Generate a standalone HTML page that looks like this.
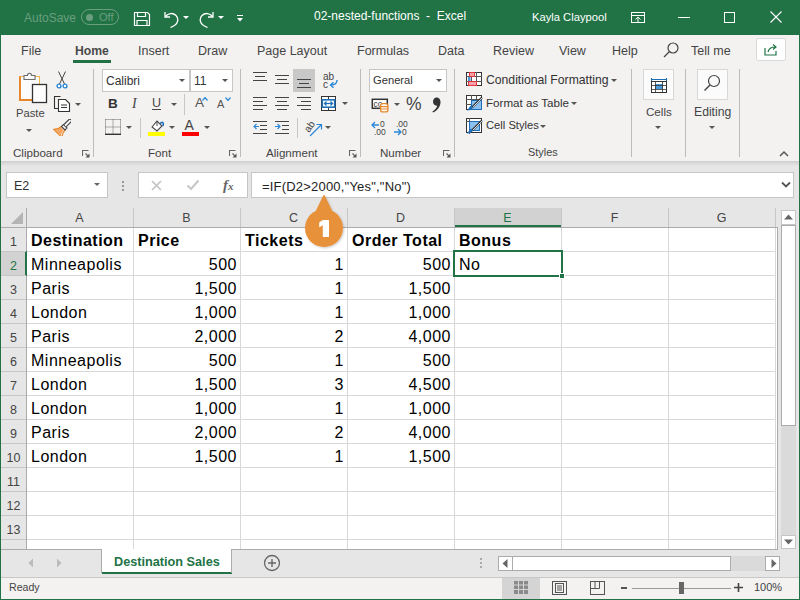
<!DOCTYPE html><html><head><meta charset="utf-8"><style>
*{margin:0;padding:0;box-sizing:border-box}
html,body{width:800px;height:600px;overflow:hidden;background:#f3f2f1;font-family:"Liberation Sans",sans-serif;position:relative}
div,span,svg{position:absolute}
.t{white-space:pre;line-height:1}
</style></head><body>
<div style="left:0px;top:0px;width:800px;height:35px;background:#217346"></div>
<div class="t" style="left:24px;top:12px;font-size:12px;color:#6a9e7f;font-weight:normal;">AutoSave</div>
<div style="left:81px;top:9px;width:38px;height:16px;border:1px solid #6a9e7f;border-radius:8px"></div>
<div style="left:85.5px;top:14px;width:7px;height:7px;background:#6a9e7f;border-radius:50%"></div>
<div class="t" style="left:99px;top:12px;font-size:11px;color:#6a9e7f;font-weight:normal;">Off</div>
<svg style="left:133px;top:11px;" width="18" height="16" viewBox="0 0 18 16"><path d="M1.5 1.5h13l2 2v11h-15z" fill="none" stroke="#fff" stroke-width="1.2"/><path d="M4.5 1.5v4h8v-4M4 14.5v-5h10v5" fill="none" stroke="#fff" stroke-width="1.2"/></svg>
<svg style="left:162px;top:10px;" width="18" height="18" viewBox="0 0 18 18"><path d="M3 2v5h5" fill="none" stroke="#fff" stroke-width="1.3"/><path d="M3.5 6.5C6 3 11 2.5 14 5.5c3 3 2 8-1.5 10l-4 2" fill="none" stroke="#fff" stroke-width="1.3"/></svg>
<svg style="left:183px;top:16px;" width="6" height="4" viewBox="0 0 6 4"><path d="M0 0h6l-3 3z" fill="#fff"/></svg>
<svg style="left:198px;top:10px;" width="18" height="18" viewBox="0 0 18 18"><path d="M15 2v5h-5" fill="none" stroke="#fff" stroke-width="1.3"/><path d="M14.5 6.5C12 3 7 2.5 4 5.5c-3 3-2 8 1.5 10l4 2" fill="none" stroke="#fff" stroke-width="1.3"/></svg>
<svg style="left:218px;top:16px;" width="6" height="4" viewBox="0 0 6 4"><path d="M0 0h6l-3 3z" fill="#fff"/></svg>
<svg style="left:236px;top:14px;" width="8" height="9" viewBox="0 0 8 9"><path d="M1 1.5h6" stroke="#fff" stroke-width="1"/><path d="M1 4h6l-3 3.5z" fill="#fff"/></svg>
<div class="t" style="left:314px;top:10px;font-size:12px;color:#fff;font-weight:normal;">02-nested-functions  -  Excel</div>
<div class="t" style="left:532px;top:12px;font-size:11.2px;color:#fff;font-weight:normal;">Kayla Claypool</div>
<svg style="left:631px;top:12px;" width="14" height="11" viewBox="0 0 14 11"><rect x="0.5" y="0.5" width="13" height="10" fill="none" stroke="#fff"/><path d="M0.5 3.5h13" stroke="#fff"/><path d="M7 10V5M4.5 7.5L7 5l2.5 2.5" fill="none" stroke="#fff"/></svg>
<div style="left:678px;top:17px;width:12px;height:1px;background:#fff"></div>
<div style="left:724px;top:12px;width:11px;height:11px;border:1px solid #fff"></div>
<svg style="left:770px;top:11px;" width="12" height="12" viewBox="0 0 12 12"><path d="M0.5 0.5l11 11M11.5 0.5l-11 11" stroke="#fff" stroke-width="1.1"/></svg>
<div class="t" style="left:21px;top:45px;font-size:12.5px;color:#444;font-weight:normal;">File</div>
<div class="t" style="left:75px;top:45px;font-size:12.2px;color:#4a4a4a;font-weight:bold;">Home</div>
<div class="t" style="left:138px;top:45px;font-size:12.5px;color:#444;font-weight:normal;">Insert</div>
<div class="t" style="left:198px;top:45px;font-size:12.5px;color:#444;font-weight:normal;">Draw</div>
<div class="t" style="left:257px;top:45px;font-size:12.5px;color:#444;font-weight:normal;">Page Layout</div>
<div class="t" style="left:357px;top:45px;font-size:12.5px;color:#444;font-weight:normal;">Formulas</div>
<div class="t" style="left:438px;top:45px;font-size:12.5px;color:#444;font-weight:normal;">Data</div>
<div class="t" style="left:493px;top:45px;font-size:12.5px;color:#444;font-weight:normal;">Review</div>
<div class="t" style="left:559px;top:45px;font-size:12.5px;color:#444;font-weight:normal;">View</div>
<div class="t" style="left:612px;top:45px;font-size:12.5px;color:#444;font-weight:normal;">Help</div>
<div class="t" style="left:691px;top:45px;font-size:12.5px;color:#444;font-weight:normal;">Tell me</div>
<div style="left:73px;top:60px;width:38px;height:3px;background:#217346"></div>
<svg style="left:663px;top:42px;" width="16" height="16" viewBox="0 0 16 16"><circle cx="10" cy="6" r="5" fill="none" stroke="#444" stroke-width="1.2"/><path d="M6.5 9.5L1 15" stroke="#444" stroke-width="1.3"/></svg>
<div style="left:756px;top:38px;width:30px;height:23px;background:#fff;border:1px solid #dadada;border-radius:2px"></div>
<svg style="left:763px;top:42px;" width="16" height="15" viewBox="0 0 16 15"><path d="M2 6v7h11V9" fill="none" stroke="#217346" stroke-width="1.2"/><path d="M5 10c1-4 4-5 7-5M10 2.5l3 2.5-3 2.5" fill="none" stroke="#217346" stroke-width="1.2"/></svg>
<div style="left:93px;top:69px;width:1px;height:88px;background:#bcbcbc"></div>
<div style="left:240px;top:69px;width:1px;height:88px;background:#bcbcbc"></div>
<div style="left:360px;top:69px;width:1px;height:88px;background:#bcbcbc"></div>
<div style="left:454px;top:69px;width:1px;height:88px;background:#bcbcbc"></div>
<div style="left:631px;top:69px;width:1px;height:88px;background:#bcbcbc"></div>
<div style="left:685px;top:69px;width:1px;height:88px;background:#bcbcbc"></div>
<div style="left:739px;top:69px;width:1px;height:88px;background:#bcbcbc"></div>
<div class="t" style="left:13px;top:147px;font-size:11.6px;color:#444;font-weight:normal;">Clipboard</div>
<div class="t" style="left:148px;top:147px;font-size:11.6px;color:#444;font-weight:normal;">Font</div>
<div class="t" style="left:266px;top:147px;font-size:11.6px;color:#444;font-weight:normal;">Alignment</div>
<div class="t" style="left:380px;top:147px;font-size:11.6px;color:#444;font-weight:normal;">Number</div>
<div class="t" style="left:528px;top:147px;font-size:10.9px;color:#444;font-weight:normal;">Styles</div>
<svg style="left:82px;top:150px;" width="8" height="8" viewBox="0 0 8 8"><path d="M0.5 6V0.5H6.5" fill="none" stroke="#666" stroke-width="1.1"/><path d="M3.5 3.5l3 3" stroke="#666" stroke-width="1.2"/><path d="M7.5 3.5v4h-4z" fill="#555"/></svg>
<svg style="left:229px;top:150px;" width="8" height="8" viewBox="0 0 8 8"><path d="M0.5 6V0.5H6.5" fill="none" stroke="#666" stroke-width="1.1"/><path d="M3.5 3.5l3 3" stroke="#666" stroke-width="1.2"/><path d="M7.5 3.5v4h-4z" fill="#555"/></svg>
<svg style="left:349px;top:150px;" width="8" height="8" viewBox="0 0 8 8"><path d="M0.5 6V0.5H6.5" fill="none" stroke="#666" stroke-width="1.1"/><path d="M3.5 3.5l3 3" stroke="#666" stroke-width="1.2"/><path d="M7.5 3.5v4h-4z" fill="#555"/></svg>
<svg style="left:443px;top:150px;" width="8" height="8" viewBox="0 0 8 8"><path d="M0.5 6V0.5H6.5" fill="none" stroke="#666" stroke-width="1.1"/><path d="M3.5 3.5l3 3" stroke="#666" stroke-width="1.2"/><path d="M7.5 3.5v4h-4z" fill="#555"/></svg>
<svg style="left:16px;top:71px;" width="32" height="33" viewBox="0 0 32 33"><rect x="3.5" y="5.5" width="20" height="24" fill="#fbfbfb" stroke="#f3b44f" stroke-width="1"/><path d="M4 5.5V29h19" fill="none" stroke="#e8862a" stroke-width="2"/><path d="M8 8.5V4.5h3.5c0-3 4-3 4 0H19v4z" fill="#fafafa" stroke="#6b6b6b" stroke-width="1.1"/><rect x="16.5" y="13.5" width="14" height="18" fill="#fdfdfd" stroke="#333" stroke-width="1.3"/></svg>
<div class="t" style="left:16px;top:108px;font-size:11.2px;color:#444;font-weight:normal;">Paste</div>
<svg style="left:26px;top:128.5px;" width="6" height="4" viewBox="0 0 6 4"><path d="M0 0h6l-3 3z" fill="#555"/></svg>
<svg style="left:56px;top:71px;" width="12" height="18" viewBox="0 0 12 18"><path d="M2.5 0.5L8.5 13M9.5 0.5L3.5 13" stroke="#444" stroke-width="1"/><circle cx="3" cy="15" r="1.9" fill="#fff" stroke="#2b88d8" stroke-width="1.4"/><circle cx="9" cy="15" r="1.9" fill="#fff" stroke="#2b88d8" stroke-width="1.4"/></svg>
<svg style="left:53px;top:96px;" width="18" height="16" viewBox="0 0 18 16"><path d="M6 12.5H1.5V0.5h6" fill="none" stroke="#333" stroke-width="1.1"/><path d="M5.5 3.5h7l4 4v8h-11z" fill="#fff" stroke="#333" stroke-width="1.1"/><path d="M8 9h6M8 11.5h6" stroke="#333"/></svg>
<svg style="left:75px;top:102.5px;" width="6" height="4" viewBox="0 0 6 4"><path d="M0 0h6l-3 3z" fill="#555"/></svg>
<svg style="left:53px;top:119px;" width="18" height="17" viewBox="0 0 18 17"><path d="M1 10.5c3 0 5.5-1 7.5-3l3.5 3.5c-2 2-3 4.5-3 7.5z" fill="#fff" stroke="#e8862a" stroke-width="1.3"/><path d="M2.5 11c2.5-0.5 4-1.2 5.5-2.5l2.5 2.5c-1.2 1.5-2 3-2.5 5.5z" fill="#f4a460"/><path d="M8.5 7.5l2-2 3.5 3.5-2 2z" fill="#fff" stroke="#444" stroke-width="1.1"/><path d="M11 5.5l5-5a1.6 1.6 0 0 1 2.2 2.2l-5 5" fill="#fff" stroke="#444" stroke-width="1.1"/></svg>
<div style="left:102px;top:69px;width:88px;height:23px;background:#fff;border:1px solid #c6c6c6"></div>
<div style="left:190px;top:69px;width:43px;height:23px;background:#fff;border:1px solid #c6c6c6"></div>
<div class="t" style="left:106px;top:75px;font-size:12px;color:#333;font-weight:normal;">Calibri</div>
<div class="t" style="left:194px;top:75px;font-size:12px;color:#333;font-weight:normal;">11</div>
<svg style="left:179px;top:78.5px;" width="6" height="4" viewBox="0 0 6 4"><path d="M0 0h6l-3 3z" fill="#555"/></svg>
<svg style="left:222px;top:78.5px;" width="6" height="4" viewBox="0 0 6 4"><path d="M0 0h6l-3 3z" fill="#555"/></svg>
<div class="t" style="left:108px;top:97px;font-size:13.5px;color:#333;font-weight:bold;">B</div>
<div class="t" style="left:132px;top:97px;font-size:14px;color:#444;font-weight:normal;font-style:italic;font-family:Liberation Serif">I</div>
<div class="t" style="left:152px;top:97px;font-size:12.5px;color:#444;font-weight:normal;">U</div>
<div style="left:152px;top:109px;width:9px;height:1px;background:#444"></div>
<svg style="left:171px;top:102.5px;" width="6" height="4" viewBox="0 0 6 4"><path d="M0 0h6l-3 3z" fill="#555"/></svg>
<div style="left:184px;top:94px;width:1px;height:21px;background:#c8c6c4"></div>
<div class="t" style="left:195px;top:96px;font-size:13.5px;color:#555;font-weight:normal;">A</div>
<svg style="left:202px;top:97px;" width="6" height="4" viewBox="0 0 6 4"><path d="M0.5 3.5l2.5-3 2.5 3" fill="none" stroke="#2b88d8" stroke-width="1.2"/></svg>
<div class="t" style="left:217px;top:99px;font-size:11px;color:#555;font-weight:normal;">A</div>
<svg style="left:225px;top:97px;" width="6" height="4" viewBox="0 0 6 4"><path d="M0.5 0.5l2.5 3 2.5-3" fill="none" stroke="#2b88d8" stroke-width="1.2"/></svg>
<svg style="left:105px;top:119px;" width="16" height="16" viewBox="0 0 16 16"><path d="M0.5 0.5h15M0.5 0.5v15M15.5 0.5v15M8 0.5v15M0.5 8h15" fill="none" stroke="#666" stroke-dasharray="1 1"/><path d="M0 15.3h16" stroke="#333" stroke-width="1.4"/></svg>
<svg style="left:126px;top:125.5px;" width="6" height="4" viewBox="0 0 6 4"><path d="M0 0h6l-3 3z" fill="#555"/></svg>
<div style="left:140px;top:118px;width:1px;height:20px;background:#c8c6c4"></div>
<svg style="left:148px;top:118px;" width="17" height="19" viewBox="0 0 17 19"><path d="M4 9l5-6 5 5-5 5z" fill="#fff" stroke="#444" stroke-width="1.1"/><path d="M9 3v5" stroke="#444"/><path d="M12 6c2-3 4-2 3 2" fill="none" stroke="#1e6fb8" stroke-width="1.6"/><rect x="0" y="14" width="17" height="4" fill="#ffff00"/></svg>
<svg style="left:169px;top:125.5px;" width="6" height="4" viewBox="0 0 6 4"><path d="M0 0h6l-3 3z" fill="#555"/></svg>
<div class="t" style="left:184.5px;top:118px;font-size:14px;color:#444;font-weight:normal;">A</div>
<div style="left:182px;top:132px;width:17px;height:4px;background:#f00"></div>
<svg style="left:204px;top:125.5px;" width="6" height="4" viewBox="0 0 6 4"><path d="M0 0h6l-3 3z" fill="#555"/></svg>
<div style="left:293px;top:69px;width:22px;height:23px;background:#c8c8c8"></div>
<div style="left:253px;top:72px;width:14px;height:1px;background:#444"></div>
<div style="left:255px;top:76px;width:10px;height:1px;background:#444"></div>
<div style="left:253px;top:80px;width:14px;height:1px;background:#444"></div>
<div style="left:275px;top:75px;width:14px;height:1px;background:#444"></div>
<div style="left:277px;top:79px;width:10px;height:1px;background:#444"></div>
<div style="left:275px;top:83px;width:14px;height:1px;background:#444"></div>
<div style="left:297px;top:79px;width:14px;height:1px;background:#444"></div>
<div style="left:299px;top:83px;width:10px;height:1px;background:#444"></div>
<div style="left:297px;top:87px;width:14px;height:1px;background:#444"></div>
<svg style="left:322px;top:71px;" width="17" height="18" viewBox="0 0 17 18"><text x="1" y="8.5" font-family="Liberation Sans" font-size="10" fill="#444">ab</text><text x="1" y="17" font-family="Liberation Sans" font-size="10" fill="#444">c</text><path d="M9 14c2.5 0 6-1 6-5" fill="none" stroke="#2b88d8" stroke-width="1.4"/><path d="M11.5 11.3L8.5 14l3 2.7" fill="none" stroke="#2b88d8" stroke-width="1.4"/></svg>
<div style="left:253px;top:97px;width:14px;height:1px;background:#444"></div>
<div style="left:275px;top:97px;width:14px;height:1px;background:#444"></div>
<div style="left:297px;top:97px;width:14px;height:1px;background:#444"></div>
<div style="left:253px;top:101px;width:10px;height:1px;background:#444"></div>
<div style="left:277px;top:101px;width:10px;height:1px;background:#444"></div>
<div style="left:301px;top:101px;width:10px;height:1px;background:#444"></div>
<div style="left:253px;top:105px;width:14px;height:1px;background:#444"></div>
<div style="left:275px;top:105px;width:14px;height:1px;background:#444"></div>
<div style="left:297px;top:105px;width:14px;height:1px;background:#444"></div>
<div style="left:253px;top:109px;width:10px;height:1px;background:#444"></div>
<div style="left:277px;top:109px;width:10px;height:1px;background:#444"></div>
<div style="left:301px;top:109px;width:10px;height:1px;background:#444"></div>
<svg style="left:321px;top:96px;" width="15" height="15" viewBox="0 0 15 15"><rect x="0.5" y="0.5" width="14" height="14" fill="#fff" stroke="#333"/><path d="M7.5 0v4M7.5 11v4" stroke="#333"/><rect x="1.3" y="3.8" width="12.4" height="7.4" fill="#fff" stroke="#1e6fb8" stroke-width="1.6"/><path d="M4 7.5h7" stroke="#1e6fb8" stroke-width="1.3"/><path d="M5.5 5.5l-2 2 2 2M9.5 5.5l2 2-2 2" fill="none" stroke="#1e6fb8" stroke-width="1.3"/></svg>
<svg style="left:342px;top:101.5px;" width="6" height="4" viewBox="0 0 6 4"><path d="M0 0h6l-3 3z" fill="#555"/></svg>
<div style="left:253px;top:121px;width:14px;height:1px;background:#444"></div>
<div style="left:260px;top:125px;width:7px;height:1px;background:#444"></div>
<div style="left:260px;top:129px;width:7px;height:1px;background:#444"></div>
<div style="left:253px;top:133px;width:14px;height:1px;background:#444"></div>
<div style="left:275px;top:121px;width:14px;height:1px;background:#444"></div>
<div style="left:282px;top:125px;width:7px;height:1px;background:#444"></div>
<div style="left:282px;top:129px;width:7px;height:1px;background:#444"></div>
<div style="left:275px;top:133px;width:14px;height:1px;background:#444"></div>
<svg style="left:253px;top:123px;" width="6" height="7" viewBox="0 0 6 7"><path d="M6 3.5H1M3.5 1L1 3.5 3.5 6" fill="none" stroke="#2b88d8" stroke-width="1.2"/></svg>
<svg style="left:275px;top:123px;" width="6" height="7" viewBox="0 0 6 7"><path d="M0 3.5h5M2.5 1L5 3.5 2.5 6" fill="none" stroke="#2b88d8" stroke-width="1.2"/></svg>
<div style="left:297px;top:118px;width:1px;height:20px;background:#c8c6c4"></div>
<svg style="left:304px;top:118px;" width="20" height="19" viewBox="0 0 20 19"><text x="0" y="0" font-family="Liberation Sans" font-size="10" fill="#444" transform="translate(5 15) rotate(-55)">ab</text><path d="M6 18L17 7" fill="none" stroke="#2b88d8" stroke-width="1.2"/><path d="M12.5 6.5h5v5" fill="none" stroke="#2b88d8" stroke-width="1.2"/></svg>
<svg style="left:325px;top:125.5px;" width="6" height="4" viewBox="0 0 6 4"><path d="M0 0h6l-3 3z" fill="#555"/></svg>
<div style="left:369px;top:69px;width:78px;height:23px;background:#fff;border:1px solid #c6c6c6"></div>
<div class="t" style="left:373px;top:75px;font-size:11.2px;color:#333;font-weight:normal;">General</div>
<svg style="left:436px;top:78.5px;" width="6" height="4" viewBox="0 0 6 4"><path d="M0 0h6l-3 3z" fill="#555"/></svg>
<svg style="left:371px;top:98px;" width="18" height="15" viewBox="0 0 18 15"><rect x="1.3" y="1.3" width="15" height="9" fill="#fff" stroke="#333" stroke-width="1.5"/><text x="2.5" y="9" font-family="Liberation Sans" font-size="8.5" fill="#333">co</text><rect x="9.6" y="5.6" width="7.3" height="8.3" rx="2.2" fill="#fff" stroke="#e8862a" stroke-width="1.3"/><path d="M9.8 8.6h7M9.8 11h7" stroke="#e8862a" stroke-width="1.1"/></svg>
<svg style="left:394px;top:102.5px;" width="6" height="4" viewBox="0 0 6 4"><path d="M0 0h6l-3 3z" fill="#555"/></svg>
<div class="t" style="left:406px;top:96px;font-size:17.5px;color:#444;font-weight:normal;">%</div>
<svg style="left:432px;top:97px;" width="9" height="16" viewBox="0 0 9 16"><path d="M4.5 0.5c2.5 0 4 1.8 4 4.5 0 4.5-3 8.5-7.5 10.5l-0.6-1C3.2 13 4.8 11 5.2 8.8 3 8.8 1 7.3 1 4.7 1 2.2 2.5 0.5 4.5 0.5z" fill="#333"/></svg>
<svg style="left:371px;top:119px;" width="18" height="17" viewBox="0 0 18 17"><path d="M1 6h7M4 3L1 6l3 3" fill="none" stroke="#2b88d8" stroke-width="1.3"/><text x="9" y="8" font-family="Liberation Sans" font-size="8.5" fill="#444">0</text><text x="3" y="16" font-family="Liberation Sans" font-size="8.5" fill="#444">.00</text></svg>
<svg style="left:393px;top:119px;" width="18" height="17" viewBox="0 0 18 17"><text x="3" y="8" font-family="Liberation Sans" font-size="8.5" fill="#444">.00</text><path d="M1 13h7M5 10l3 3-3 3" fill="none" stroke="#2b88d8" stroke-width="1.3"/><text x="9" y="16" font-family="Liberation Sans" font-size="8.5" fill="#444">0</text></svg>
<svg style="left:466px;top:72px;" width="17" height="15" viewBox="0 0 17 15"><rect x="0.5" y="0.5" width="15" height="13" fill="#fff" stroke="#333"/><path d="M0 4.5h16M0 9.5h16M5.5 0v14M10.5 0v14" stroke="#555" stroke-width="1"/><rect x="3.5" y="0.5" width="5" height="4" fill="#f4a0a8" stroke="#e3343f"/><rect x="2" y="5" width="2.5" height="4" fill="#4a9bdc"/><rect x="2.5" y="9.5" width="8" height="4" fill="#f4a0a8" stroke="#e3343f"/></svg>
<div class="t" style="left:486px;top:74px;font-size:12.2px;color:#333;font-weight:normal;">Conditional Formatting</div>
<svg style="left:611px;top:78.5px;" width="6" height="4" viewBox="0 0 6 4"><path d="M0 0h6l-3 3z" fill="#555"/></svg>
<svg style="left:466px;top:95px;" width="17" height="16" viewBox="0 0 17 16"><rect x="0.5" y="0.5" width="15" height="14" fill="#fff" stroke="#333"/><path d="M0 4.5h16M0 9.5h6M5.5 0v9M10.5 0v5" stroke="#555" stroke-width="1"/><rect x="5.5" y="5.5" width="10" height="9" fill="#8cc0ee" stroke="#1e6fb8"/><path d="M6 12.5L16 2.5" stroke="#333" stroke-width="2.2"/><path d="M6.5 12.5L16 3" stroke="#fff" stroke-width="0.8"/><path d="M1 15.5c3 0 5-1 6-3l-2-2c-2 1-2 3-4 5z" fill="#1e6fb8"/></svg>
<div class="t" style="left:486px;top:97px;font-size:11.6px;color:#333;font-weight:normal;">Format as Table</div>
<svg style="left:571px;top:101.5px;" width="6" height="4" viewBox="0 0 6 4"><path d="M0 0h6l-3 3z" fill="#555"/></svg>
<svg style="left:466px;top:118px;" width="17" height="16" viewBox="0 0 17 16"><rect x="0.5" y="0.5" width="15" height="14" fill="#fff" stroke="#333"/><path d="M0 3.5h16M3.5 0v16" stroke="#555" stroke-width="1"/><rect x="3.5" y="3.5" width="10" height="9" fill="#8cc0ee" stroke="#1e6fb8"/><path d="M6 12.5L16 2.5" stroke="#333" stroke-width="2.2"/><path d="M6.5 12.5L16 3" stroke="#fff" stroke-width="0.8"/><path d="M1 15.5c3 0 5-1 6-3l-2-2c-2 1-2 3-4 5z" fill="#1e6fb8"/></svg>
<div class="t" style="left:486px;top:120px;font-size:11.2px;color:#333;font-weight:normal;">Cell Styles</div>
<svg style="left:540px;top:124.5px;" width="6" height="4" viewBox="0 0 6 4"><path d="M0 0h6l-3 3z" fill="#555"/></svg>
<div style="left:643px;top:69px;width:31px;height:31px;background:#fbfbfb;border:1px solid #d8d8d8"></div>
<svg style="left:651px;top:77px;" width="16" height="16" viewBox="0 0 16 16"><path d="M0.5 2.5h15" stroke="#1e6fb8"/><path d="M0.5 1v3M15.5 1v3" stroke="#1e6fb8"/><rect x="0.5" y="4.5" width="15" height="11" fill="#fff" stroke="#333"/><rect x="4" y="7" width="8" height="5" fill="#4a9bdc"/><path d="M0 8.5h16M0 12.5h16M4.5 4v12M11.5 4v12" stroke="#333" stroke-width="0.8"/></svg>
<div class="t" style="left:646px;top:106px;font-size:11.6px;color:#444;font-weight:normal;">Cells</div>
<svg style="left:655px;top:125.5px;" width="6" height="4" viewBox="0 0 6 4"><path d="M0 0h6l-3 3z" fill="#555"/></svg>
<div style="left:697px;top:69px;width:31px;height:31px;background:#fbfbfb;border:1px solid #d8d8d8"></div>
<svg style="left:703px;top:74px;" width="18" height="18" viewBox="0 0 18 18"><circle cx="11" cy="7" r="5.5" fill="none" stroke="#444" stroke-width="1.2"/><path d="M7 11l-5.5 5.5" stroke="#444" stroke-width="1.4"/></svg>
<div class="t" style="left:694px;top:106px;font-size:12.2px;color:#444;font-weight:normal;">Editing</div>
<svg style="left:709px;top:125.5px;" width="6" height="4" viewBox="0 0 6 4"><path d="M0 0h6l-3 3z" fill="#555"/></svg>
<svg style="left:779px;top:150px;" width="10" height="7" viewBox="0 0 10 7"><path d="M1 6l4-4 4 4" fill="none" stroke="#555" stroke-width="1.5"/></svg>
<div style="left:1px;top:161px;width:798px;height:47px;background:#e6e6e6"></div>
<div style="left:1px;top:161px;width:798px;height:5px;background:linear-gradient(#cfcfcf,#e6e6e6)"></div>
<div style="left:6px;top:172px;width:102px;height:26px;background:#fff;border:1px solid #c6c6c6"></div>
<div class="t" style="left:14px;top:180px;font-size:12.5px;color:#333;font-weight:normal;">E2</div>
<svg style="left:94px;top:182.5px;" width="6" height="4" viewBox="0 0 6 4"><path d="M0 0h6l-3 3z" fill="#666"/></svg>
<div style="left:122px;top:181px;width:2px;height:2px;background:#999"></div>
<div style="left:122px;top:185px;width:2px;height:2px;background:#999"></div>
<div style="left:122px;top:189px;width:2px;height:2px;background:#999"></div>
<div style="left:138px;top:172px;width:110px;height:26px;background:#fff;border:1px solid #c6c6c6"></div>
<svg style="left:151px;top:180px;" width="11" height="11" viewBox="0 0 11 11"><path d="M1 1l9 9M10 1L1 10" stroke="#c4c4c4" stroke-width="1.7"/></svg>
<svg style="left:186px;top:179px;" width="14" height="12" viewBox="0 0 14 12"><path d="M1.5 6.5l3.5 3.5 7.5-8.5" fill="none" stroke="#c8c8c8" stroke-width="2.2"/></svg>
<div class="t" style="left:223px;top:178px;font-size:15px;color:#666;font-weight:bold;font-family:Liberation Serif"><i>f</i><span style="position:static;font-size:11px"><i>x</i></span></div>
<div style="left:251px;top:172px;width:543px;height:26px;background:#fff;border:1px solid #c6c6c6"></div>
<div class="t" style="left:262px;top:180px;font-size:13px;color:#222;font-weight:normal;letter-spacing:0.2px">=IF(D2&gt;2000,"Yes","No")</div>
<svg style="left:781px;top:181px;" width="10" height="7" viewBox="0 0 10 7"><path d="M1 1.5l4 4 4-4" fill="none" stroke="#555" stroke-width="1.8"/></svg>
<div style="left:1px;top:208px;width:777px;height:341px;background:#fff"></div>
<div style="left:1px;top:208px;width:777px;height:20px;background:#e6e6e6"></div>
<div style="left:1px;top:227px;width:777px;height:1px;background:#ababab"></div>
<div style="left:454px;top:208px;width:107px;height:19px;background:#d2d2d2"></div>
<div style="left:454px;top:225px;width:108px;height:2px;background:#217346"></div>
<svg style="left:11px;top:212px;" width="13" height="13" viewBox="0 0 13 13"><path d="M12 0v12H0z" fill="#b4b4b4"/></svg>
<div style="left:26px;top:208px;width:1px;height:341px;background:#ababab"></div>
<div class="t" style="left:26px;top:212px;width:107px;text-align:center;font-size:12.5px;color:#444">A</div>
<div style="left:133px;top:208px;width:1px;height:19px;background:#c6c6c6"></div>
<div class="t" style="left:133px;top:212px;width:107px;text-align:center;font-size:12.5px;color:#444">B</div>
<div style="left:240px;top:208px;width:1px;height:19px;background:#c6c6c6"></div>
<div class="t" style="left:240px;top:212px;width:107px;text-align:center;font-size:12.5px;color:#444">C</div>
<div style="left:347px;top:208px;width:1px;height:19px;background:#c6c6c6"></div>
<div class="t" style="left:347px;top:212px;width:107px;text-align:center;font-size:12.5px;color:#444">D</div>
<div style="left:454px;top:208px;width:1px;height:19px;background:#c6c6c6"></div>
<div class="t" style="left:454px;top:212px;width:107px;text-align:center;font-size:12.5px;color:#217346">E</div>
<div style="left:561px;top:208px;width:1px;height:19px;background:#c6c6c6"></div>
<div class="t" style="left:561px;top:212px;width:107px;text-align:center;font-size:12.5px;color:#444">F</div>
<div style="left:668px;top:208px;width:1px;height:19px;background:#c6c6c6"></div>
<div class="t" style="left:668px;top:212px;width:107px;text-align:center;font-size:12.5px;color:#444">G</div>
<div style="left:775px;top:208px;width:1px;height:19px;background:#c6c6c6"></div>
<div style="left:1px;top:228px;width:25px;height:321px;background:#e6e6e6"></div>
<div style="left:1px;top:252px;width:25px;height:23px;background:#d2d2d2"></div>
<div style="left:25px;top:251px;width:2px;height:25px;background:#217346"></div>
<div class="t" style="left:1px;top:236px;width:25px;text-align:center;font-size:12.5px;color:#444">1</div>
<div style="left:1px;top:251px;width:25px;height:1px;background:#c6c6c6"></div>
<div class="t" style="left:1px;top:260px;width:25px;text-align:center;font-size:12.5px;color:#217346">2</div>
<div style="left:1px;top:275px;width:25px;height:1px;background:#c6c6c6"></div>
<div class="t" style="left:1px;top:284px;width:25px;text-align:center;font-size:12.5px;color:#444">3</div>
<div style="left:1px;top:299px;width:25px;height:1px;background:#c6c6c6"></div>
<div class="t" style="left:1px;top:308px;width:25px;text-align:center;font-size:12.5px;color:#444">4</div>
<div style="left:1px;top:323px;width:25px;height:1px;background:#c6c6c6"></div>
<div class="t" style="left:1px;top:332px;width:25px;text-align:center;font-size:12.5px;color:#444">5</div>
<div style="left:1px;top:347px;width:25px;height:1px;background:#c6c6c6"></div>
<div class="t" style="left:1px;top:356px;width:25px;text-align:center;font-size:12.5px;color:#444">6</div>
<div style="left:1px;top:371px;width:25px;height:1px;background:#c6c6c6"></div>
<div class="t" style="left:1px;top:380px;width:25px;text-align:center;font-size:12.5px;color:#444">7</div>
<div style="left:1px;top:395px;width:25px;height:1px;background:#c6c6c6"></div>
<div class="t" style="left:1px;top:404px;width:25px;text-align:center;font-size:12.5px;color:#444">8</div>
<div style="left:1px;top:419px;width:25px;height:1px;background:#c6c6c6"></div>
<div class="t" style="left:1px;top:428px;width:25px;text-align:center;font-size:12.5px;color:#444">9</div>
<div style="left:1px;top:443px;width:25px;height:1px;background:#c6c6c6"></div>
<div class="t" style="left:1px;top:452px;width:25px;text-align:center;font-size:12.5px;color:#444">10</div>
<div style="left:1px;top:467px;width:25px;height:1px;background:#c6c6c6"></div>
<div class="t" style="left:1px;top:476px;width:25px;text-align:center;font-size:12.5px;color:#444">11</div>
<div style="left:1px;top:491px;width:25px;height:1px;background:#c6c6c6"></div>
<div class="t" style="left:1px;top:500px;width:25px;text-align:center;font-size:12.5px;color:#444">12</div>
<div style="left:1px;top:515px;width:25px;height:1px;background:#c6c6c6"></div>
<div class="t" style="left:1px;top:524px;width:25px;text-align:center;font-size:12.5px;color:#444">13</div>
<div style="left:1px;top:539px;width:25px;height:1px;background:#c6c6c6"></div>
<div style="left:27px;top:251px;width:749px;height:1px;background:#d8d8d8"></div>
<div style="left:27px;top:275px;width:749px;height:1px;background:#d8d8d8"></div>
<div style="left:27px;top:299px;width:749px;height:1px;background:#d8d8d8"></div>
<div style="left:27px;top:323px;width:749px;height:1px;background:#d8d8d8"></div>
<div style="left:27px;top:347px;width:749px;height:1px;background:#d8d8d8"></div>
<div style="left:27px;top:371px;width:749px;height:1px;background:#d8d8d8"></div>
<div style="left:27px;top:395px;width:749px;height:1px;background:#d8d8d8"></div>
<div style="left:27px;top:419px;width:749px;height:1px;background:#d8d8d8"></div>
<div style="left:27px;top:443px;width:749px;height:1px;background:#d8d8d8"></div>
<div style="left:27px;top:467px;width:749px;height:1px;background:#d8d8d8"></div>
<div style="left:27px;top:491px;width:749px;height:1px;background:#d8d8d8"></div>
<div style="left:27px;top:515px;width:749px;height:1px;background:#d8d8d8"></div>
<div style="left:27px;top:539px;width:749px;height:1px;background:#d8d8d8"></div>
<div style="left:133px;top:228px;width:1px;height:321px;background:#d8d8d8"></div>
<div style="left:240px;top:228px;width:1px;height:321px;background:#d8d8d8"></div>
<div style="left:347px;top:228px;width:1px;height:321px;background:#d8d8d8"></div>
<div style="left:454px;top:228px;width:1px;height:321px;background:#d8d8d8"></div>
<div style="left:561px;top:228px;width:1px;height:321px;background:#d8d8d8"></div>
<div style="left:668px;top:228px;width:1px;height:321px;background:#d8d8d8"></div>
<div style="left:775px;top:228px;width:1px;height:321px;background:#d8d8d8"></div>
<div style="left:777px;top:227px;width:1px;height:322px;background:#ababab"></div>
<div class="t" style="left:31px;top:233px;font-size:16px;letter-spacing:0.5px;color:#000;font-weight:bold;">Destination</div>
<div class="t" style="left:138px;top:233px;font-size:16px;letter-spacing:0.5px;color:#000;font-weight:bold;">Price</div>
<div class="t" style="left:245px;top:233px;font-size:16px;letter-spacing:0.5px;color:#000;font-weight:bold;">Tickets</div>
<div class="t" style="left:352px;top:233px;font-size:16px;letter-spacing:0.5px;color:#000;font-weight:bold;">Order Total</div>
<div class="t" style="left:459px;top:233px;font-size:16px;letter-spacing:0.5px;color:#000;font-weight:bold;">Bonus</div>
<div class="t" style="left:31px;top:257px;font-size:16px;letter-spacing:0.5px;color:#000;">Minneapolis</div>
<div class="t" style="left:133px;top:257px;width:104px;text-align:right;font-size:16px;letter-spacing:0.5px;color:#000;">500</div>
<div class="t" style="left:240px;top:257px;width:104px;text-align:right;font-size:16px;letter-spacing:0.5px;color:#000;">1</div>
<div class="t" style="left:347px;top:257px;width:104px;text-align:right;font-size:16px;letter-spacing:0.5px;color:#000;">500</div>
<div class="t" style="left:459px;top:257px;font-size:16px;letter-spacing:0.5px;color:#000;">No</div>
<div class="t" style="left:31px;top:281px;font-size:16px;letter-spacing:0.5px;color:#000;">Paris</div>
<div class="t" style="left:133px;top:281px;width:104px;text-align:right;font-size:16px;letter-spacing:0.5px;color:#000;">1,500</div>
<div class="t" style="left:240px;top:281px;width:104px;text-align:right;font-size:16px;letter-spacing:0.5px;color:#000;">1</div>
<div class="t" style="left:347px;top:281px;width:104px;text-align:right;font-size:16px;letter-spacing:0.5px;color:#000;">1,500</div>
<div class="t" style="left:31px;top:305px;font-size:16px;letter-spacing:0.5px;color:#000;">London</div>
<div class="t" style="left:133px;top:305px;width:104px;text-align:right;font-size:16px;letter-spacing:0.5px;color:#000;">1,000</div>
<div class="t" style="left:240px;top:305px;width:104px;text-align:right;font-size:16px;letter-spacing:0.5px;color:#000;">1</div>
<div class="t" style="left:347px;top:305px;width:104px;text-align:right;font-size:16px;letter-spacing:0.5px;color:#000;">1,000</div>
<div class="t" style="left:31px;top:329px;font-size:16px;letter-spacing:0.5px;color:#000;">Paris</div>
<div class="t" style="left:133px;top:329px;width:104px;text-align:right;font-size:16px;letter-spacing:0.5px;color:#000;">2,000</div>
<div class="t" style="left:240px;top:329px;width:104px;text-align:right;font-size:16px;letter-spacing:0.5px;color:#000;">2</div>
<div class="t" style="left:347px;top:329px;width:104px;text-align:right;font-size:16px;letter-spacing:0.5px;color:#000;">4,000</div>
<div class="t" style="left:31px;top:353px;font-size:16px;letter-spacing:0.5px;color:#000;">Minneapolis</div>
<div class="t" style="left:133px;top:353px;width:104px;text-align:right;font-size:16px;letter-spacing:0.5px;color:#000;">500</div>
<div class="t" style="left:240px;top:353px;width:104px;text-align:right;font-size:16px;letter-spacing:0.5px;color:#000;">1</div>
<div class="t" style="left:347px;top:353px;width:104px;text-align:right;font-size:16px;letter-spacing:0.5px;color:#000;">500</div>
<div class="t" style="left:31px;top:377px;font-size:16px;letter-spacing:0.5px;color:#000;">London</div>
<div class="t" style="left:133px;top:377px;width:104px;text-align:right;font-size:16px;letter-spacing:0.5px;color:#000;">1,500</div>
<div class="t" style="left:240px;top:377px;width:104px;text-align:right;font-size:16px;letter-spacing:0.5px;color:#000;">3</div>
<div class="t" style="left:347px;top:377px;width:104px;text-align:right;font-size:16px;letter-spacing:0.5px;color:#000;">4,500</div>
<div class="t" style="left:31px;top:401px;font-size:16px;letter-spacing:0.5px;color:#000;">London</div>
<div class="t" style="left:133px;top:401px;width:104px;text-align:right;font-size:16px;letter-spacing:0.5px;color:#000;">1,000</div>
<div class="t" style="left:240px;top:401px;width:104px;text-align:right;font-size:16px;letter-spacing:0.5px;color:#000;">1</div>
<div class="t" style="left:347px;top:401px;width:104px;text-align:right;font-size:16px;letter-spacing:0.5px;color:#000;">1,000</div>
<div class="t" style="left:31px;top:425px;font-size:16px;letter-spacing:0.5px;color:#000;">Paris</div>
<div class="t" style="left:133px;top:425px;width:104px;text-align:right;font-size:16px;letter-spacing:0.5px;color:#000;">2,000</div>
<div class="t" style="left:240px;top:425px;width:104px;text-align:right;font-size:16px;letter-spacing:0.5px;color:#000;">2</div>
<div class="t" style="left:347px;top:425px;width:104px;text-align:right;font-size:16px;letter-spacing:0.5px;color:#000;">4,000</div>
<div class="t" style="left:31px;top:449px;font-size:16px;letter-spacing:0.5px;color:#000;">London</div>
<div class="t" style="left:133px;top:449px;width:104px;text-align:right;font-size:16px;letter-spacing:0.5px;color:#000;">1,500</div>
<div class="t" style="left:240px;top:449px;width:104px;text-align:right;font-size:16px;letter-spacing:0.5px;color:#000;">1</div>
<div class="t" style="left:347px;top:449px;width:104px;text-align:right;font-size:16px;letter-spacing:0.5px;color:#000;">1,500</div>
<div style="left:453px;top:250px;width:110px;height:27px;border:2px solid #217346"></div>
<div style="left:559px;top:273px;width:6px;height:6px;background:#217346;border:1px solid #fff"></div>
<div style="left:778px;top:208px;width:21px;height:341px;background:#e6e6e6"></div>
<div style="left:781px;top:225px;width:15px;height:200px;background:#fff;border:1px solid #ababab"></div>
<div style="left:781px;top:226px;width:15px;height:310px;background:#dadada"></div>
<div style="left:781px;top:225px;width:15px;height:201px;background:#fff;border:1px solid #ababab"></div>
<div style="left:781px;top:210px;width:15px;height:15px;background:#fff;border:1px solid #c6c6c6"></div>
<svg style="left:784px;top:214px;" width="9" height="6" viewBox="0 0 9 6"><path d="M0 5.5h9L4.5 0.5z" fill="#666"/></svg>
<div style="left:781px;top:535px;width:15px;height:14px;background:#fff;border:1px solid #c6c6c6"></div>
<svg style="left:784px;top:539px;" width="9" height="6" viewBox="0 0 9 6"><path d="M0 0.5h9L4.5 5.5z" fill="#666"/></svg>
<div style="left:1px;top:549px;width:798px;height:28px;background:#e6e6e6"></div>
<div style="left:1px;top:549px;width:101px;height:1px;background:#ababab"></div>
<div style="left:101px;top:549px;width:1px;height:24px;background:#ababab"></div>
<div style="left:102px;top:549px;width:130px;height:24px;background:#fff"></div>
<div style="left:102px;top:572px;width:130px;height:2px;background:#217346"></div>
<div class="t" style="left:114px;top:556px;font-size:12.7px;color:#217346;font-weight:bold;">Destination Sales</div>
<svg style="left:28px;top:558px;" width="6" height="10" viewBox="0 0 6 10"><path d="M5 0.5L0.5 5 5 9.5z" fill="#bbb"/></svg>
<svg style="left:56px;top:558px;" width="6" height="10" viewBox="0 0 6 10"><path d="M1 0.5L5.5 5 1 9.5z" fill="#bbb"/></svg>
<div style="left:231px;top:549px;width:1px;height:24px;background:#ababab"></div>
<div style="left:231px;top:549px;width:547px;height:1px;background:#ababab"></div>
<svg style="left:263px;top:554px;" width="18" height="18" viewBox="0 0 18 18"><circle cx="9" cy="9" r="7.5" fill="none" stroke="#666" stroke-width="1.3"/><path d="M9 5v8M5 9h8" stroke="#666" stroke-width="1.4"/></svg>
<div style="left:480px;top:558px;width:2px;height:2px;background:#aaa"></div>
<div style="left:480px;top:562px;width:2px;height:2px;background:#aaa"></div>
<div style="left:480px;top:566px;width:2px;height:2px;background:#aaa"></div>
<div style="left:498px;top:556px;width:282px;height:15px;background:#dadada"></div>
<div style="left:498px;top:556px;width:15px;height:15px;background:#fff;border:1px solid #ababab"></div>
<svg style="left:502px;top:559px;" width="6" height="9" viewBox="0 0 6 9"><path d="M5.5 0L0.5 4.5 5.5 9z" fill="#666"/></svg>
<div style="left:512px;top:556px;width:219px;height:15px;background:#fff;border:1px solid #ababab"></div>
<div style="left:765px;top:556px;width:15px;height:15px;background:#fff;border:1px solid #ababab"></div>
<svg style="left:771px;top:559px;" width="6" height="9" viewBox="0 0 6 9"><path d="M0.5 0L5.5 4.5 0.5 9z" fill="#666"/></svg>
<div style="left:1px;top:577px;width:798px;height:22px;background:#f3f2f1"></div>
<div style="left:1px;top:577px;width:798px;height:1px;background:#c8c8c8"></div>
<div class="t" style="left:9px;top:582px;font-size:10.6px;color:#444;font-weight:normal;">Ready</div>
<div style="left:502px;top:578px;width:38px;height:21px;background:#d4d4d4"></div>
<svg style="left:514px;top:581px;" width="14" height="13" viewBox="0 0 14 13"><path d="M0 0h4v3.5H0zM5 0h4v3.5H5zM10 0h4v3.5h-4zM0 4.5h4V8H0zM5 4.5h4V8H5zM10 4.5h4V8h-4zM0 9h4v4H0zM5 9h4v4H5zM10 9h4v4h-4z" fill="#8a8a8a"/></svg>
<svg style="left:552px;top:581px;" width="15" height="14" viewBox="0 0 15 14"><rect x="0.5" y="0.5" width="14" height="13" fill="none" stroke="#555"/><rect x="3.5" y="2.5" width="8" height="9" fill="none" stroke="#555"/><path d="M5 5h5M5 7h5M5 9h5" stroke="#555"/></svg>
<svg style="left:590px;top:581px;" width="15" height="14" viewBox="0 0 15 14"><rect x="0.5" y="0.5" width="14" height="13" fill="none" stroke="#555"/><path d="M0.5 7.5h9V0.5M5 0.5v7" fill="none" stroke="#555"/></svg>
<div style="left:621px;top:587px;width:6px;height:2px;background:#555"></div>
<div style="left:632px;top:588px;width:99px;height:1px;background:#999"></div>
<div style="left:679px;top:582px;width:5px;height:12px;background:#666"></div>
<svg style="left:734px;top:583px;" width="9" height="9" viewBox="0 0 9 9"><path d="M4.5 0v9M0 4.5h9" stroke="#444" stroke-width="1.6"/></svg>
<div class="t" style="left:754px;top:582px;font-size:11px;color:#444;font-weight:normal;">100%</div>
<div style="left:0px;top:0px;width:1px;height:600px;background:#217346"></div>
<div style="left:799px;top:0px;width:1px;height:600px;background:#217346"></div>
<div style="left:0px;top:599px;width:800px;height:1px;background:#217346"></div>
<svg style="left:300px;top:190px;" width="50" height="62" viewBox="0 0 50 62"><defs><filter id="sh" x="-30%" y="-30%" width="160%" height="160%"><feDropShadow dx="1" dy="1" stdDeviation="1" flood-color="#000" flood-opacity="0.22"/></filter></defs><g filter="url(#sh)"><path d="M23 6Q24 4 25 6L32.5 21.5L15.5 21.5Z" fill="#e8913a"/><circle cx="24" cy="38" r="19" fill="#e8913a"/></g><path d="M22.8 30h6.2v17h-6.2V35.3L19.2 37.2V32.4Z" fill="#fff"/></svg>
</body></html>
